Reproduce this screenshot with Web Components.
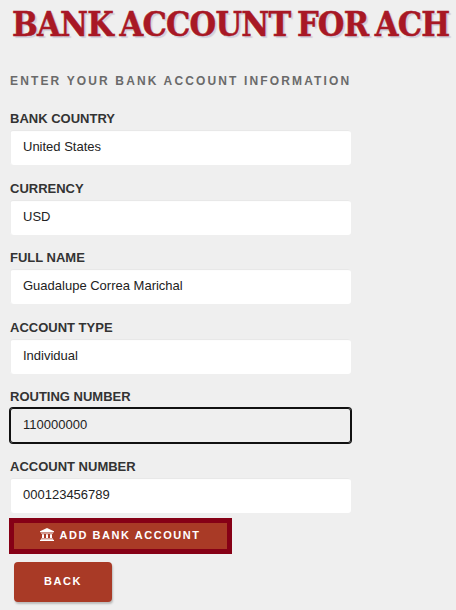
<!DOCTYPE html>
<html><head><meta charset="utf-8"><style>
html,body{margin:0;background:#efefef;}
body{font-family:"Liberation Sans",Arial,sans-serif;height:610px;overflow:hidden;}
</style></head><body>
<bank-form></bank-form>
<script>
class FormField extends HTMLElement{
  constructor(){super();const s=this.attachShadow({mode:'open'});
  s.innerHTML=`<style>
  :host{display:block;margin-bottom:15.5px}
  label{display:block;font:bold 13px/16px "Liberation Sans",Arial,sans-serif;color:#333;height:16px;margin-bottom:3px}
  .box{box-sizing:border-box;width:341px;height:35px;background:#fff;border-radius:3px;box-shadow:inset 0 2px 1px -1px #e6e6e6,inset 1px 0 0 #eee;padding:0 13px 2px;display:flex;align-items:center;font:13px "Liberation Sans",Arial,sans-serif;color:#222}
  :host([focused]) .box{background:#efefef;box-shadow:0 0 0 1px #111,inset 0 0 0 1px #111}
  </style><label></label><div class="box"><slot></slot></div>`;
  s.querySelector('label').textContent=this.getAttribute('label');}
}
customElements.define('form-field',FormField);
class PrimaryButton extends HTMLElement{
  constructor(){super();const s=this.attachShadow({mode:'open'});
  s.innerHTML=`<style>
  :host{display:block;box-sizing:border-box;font:bold 11px "Liberation Sans",Arial,sans-serif;letter-spacing:1.55px;color:#fff;background:#a93a26}
  :host([outlined]){width:223px;height:36px;margin-left:-1px;border:5px solid #860016;padding-bottom:2px;display:flex;align-items:center;justify-content:center;gap:5px}
  :host(:not([outlined])){width:98px;height:40px;margin-left:4px;padding-bottom:2px;border-radius:4px;display:flex;align-items:center;justify-content:center;box-shadow:1px 2px 2px #bbb}
  </style><slot></slot>`;}
}
customElements.define('primary-button',PrimaryButton);
class BankForm extends HTMLElement{
  constructor(){super();const s=this.attachShadow({mode:'open'});
  s.innerHTML=`<style>
  :host{display:block;padding:0 0 0 10px}
  h1{margin:0 0 0 2px;padding-top:5px;height:39px;font:bold 34px/39px "DejaVu Serif Condensed","DejaVu Serif",serif;font-stretch:condensed;letter-spacing:-.8px;word-spacing:-3.3px;-webkit-text-stroke:.5px #a81825;color:#a81825;white-space:nowrap;text-shadow:2px 2px 1px #d0d0dc}
  h2{margin:29px 0 0;height:16px;font:bold 12px/16px "Liberation Sans",Arial,sans-serif;letter-spacing:2.14px;color:#6a6a6a}
  .fields{margin-top:22px}
  svg{width:14px;height:13px;display:block}
  .gap{height:8px}
  .tight{margin-bottom:5px}
  </style>
  <h1>BANK ACCOUNT FOR ACH</h1>
  <h2>ENTER YOUR BANK ACCOUNT INFORMATION</h2>
  <div class="fields">
  <form-field label="BANK COUNTRY">United States</form-field>
  <form-field label="CURRENCY">USD</form-field>
  <form-field label="FULL NAME">Guadalupe Correa Marichal</form-field>
  <form-field label="ACCOUNT TYPE">Individual</form-field>
  <form-field label="ROUTING NUMBER" focused>110000000</form-field>
  <form-field label="ACCOUNT NUMBER" class="tight">000123456789</form-field>
  </div>
  <primary-button outlined><svg viewBox="0 0 14 13" fill="#fff"><path d="M7 0 14 3.2V4.2H0V3.2Z"/><path d="M1 4.8H13V5.6H1ZM2 6.2H4V10H2ZM6 6.2H8V10H6ZM10 6.2H12V10H10ZM1 10.4H13V11.4H1ZM0 11.8H14V13H0Z"/></svg><span>ADD BANK ACCOUNT</span></primary-button>
  <div class="gap"></div>
  <primary-button>BACK</primary-button>`;}
}
customElements.define('bank-form',BankForm);
</script></body></html>
